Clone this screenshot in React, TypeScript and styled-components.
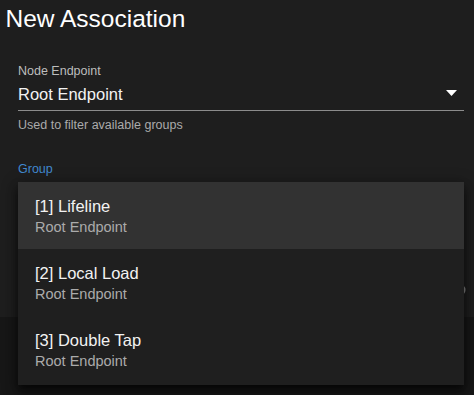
import React from 'react';
import styled, { createGlobalStyle } from 'styled-components';

const GlobalStyle = createGlobalStyle`
  html, body {
    margin: 0;
    padding: 0;
    background: #171717;
    font-family: "Liberation Sans", Arial, sans-serif;
  }
`;

const Page = styled.div`
  height: 395px;
  overflow: hidden;
  display: flex;
  flex-direction: column;
`;

const Dialog = styled.div`
  position: relative;
  height: 317px;
  flex-shrink: 0;
  padding-top: 3px;
  box-sizing: border-box;
  background: #1e1e1e;
`;

const Backdrop = styled.div`
  flex: 1;
  background: #171717;
`;

const Title = styled.h2`
  margin: 0;
  padding-left: 5.5px;
  font-size: 24.5px;
  line-height: 32px;
  font-weight: 400;
  color: #ffffff;
`;

const Content = styled.div`
  padding: 0 10px 0 18px;
  margin-top: 28px;
`;

const Label = styled.div<{ $focused?: boolean }>`
  font-size: 12.5px;
  line-height: 16px;
  color: ${({ $focused }) => ($focused ? '#4189cf' : '#bdbdbd')};
`;

const SelectRow = styled.div`
  display: flex;
  align-items: center;
  justify-content: space-between;
  margin-top: 2.5px;
  padding: 0 7px 4.5px 0;
  border-bottom: 1px solid #8c8c8c;
  min-height: 24px;
`;

const Value = styled.span`
  font-size: 16.5px;
  line-height: 24px;
  color: #f2f2f2;
`;

const Arrow = styled.svg`
  margin-top: -2px;
  flex-shrink: 0;
`;

const Helper = styled.div`
  margin-top: 5.5px;
  font-size: 12.5px;
  line-height: 16px;
  color: #ababab;
`;

const FieldGap = styled.div`
  height: 28px;
`;

const ExtraRow = styled.div`
  display: flex;
  justify-content: flex-end;
  margin-top: 74px;
  margin-right: -2px;
`;

const Menu = styled.ul`
  position: absolute;
  top: 182px;
  left: 18px;
  z-index: 2;
  width: 446px;
  margin: 0;
  padding: 0 0 2px;
  list-style: none;
  background: #1f1f1f;
  box-shadow: 0 5px 5px -3px rgba(0, 0, 0, 0.45), 0 8px 10px 1px rgba(0, 0, 0, 0.35),
    0 3px 14px 2px rgba(0, 0, 0, 0.3);
`;

const Item = styled.li<{ $active?: boolean }>`
  height: 67px;
  box-sizing: border-box;
  padding: 13px 17px 12px 17px;
  background: ${({ $active }) => ($active ? '#323232' : 'transparent')};
`;

const Primary = styled.div`
  font-size: 16.5px;
  line-height: 22px;
  color: #f2f2f2;
`;

const Secondary = styled.div`
  font-size: 14.5px;
  line-height: 20px;
  color: #ababab;
`;

const groups = [
  { id: 1, name: 'Lifeline', endpoint: 'Root Endpoint' },
  { id: 2, name: 'Local Load', endpoint: 'Root Endpoint' },
  { id: 3, name: 'Double Tap', endpoint: 'Root Endpoint' },
];

const DropArrow = () => (
  <Arrow width="11" height="6" viewBox="0 0 11 6">
    <polygon points="0,0 11,0 5.5,6" fill="#ffffff" />
  </Arrow>
);

const App = () => (
  <>
    <GlobalStyle />
    <Page>
      <Dialog>
        <Title>New Association</Title>
        <Content>
          <Label>Node Endpoint</Label>
          <SelectRow>
            <Value>Root Endpoint</Value>
            <DropArrow />
          </SelectRow>
          <Helper>Used to filter available groups</Helper>
          <FieldGap />
          <Label $focused>Group</Label>
          <SelectRow>
            <Value />
            <DropArrow />
          </SelectRow>
          <ExtraRow>
            <svg width="14" height="14" viewBox="0 0 14 14">
              <circle cx="7" cy="7" r="5.5" fill="none" stroke="#8a8a8a" strokeWidth="2" />
            </svg>
          </ExtraRow>
        </Content>
        <Menu>
          {groups.map((g, i) => (
            <Item key={g.id} $active={i === 0}>
              <Primary>
                [{g.id}] {g.name}
              </Primary>
              <Secondary>{g.endpoint}</Secondary>
            </Item>
          ))}
        </Menu>
      </Dialog>
      <Backdrop />
    </Page>
  </>
);

export default App;
